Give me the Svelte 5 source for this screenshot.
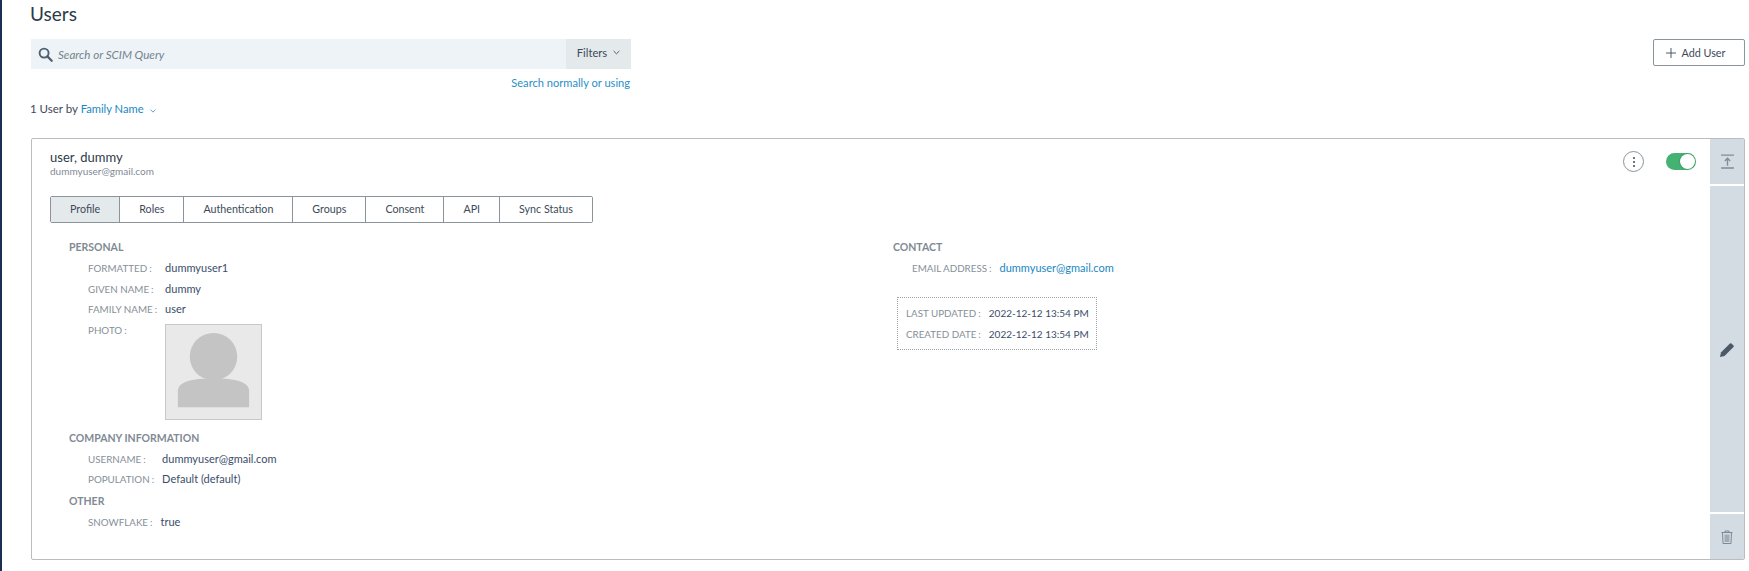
<script>
  const tabs = ["Profile", "Roles", "Authentication", "Groups", "Consent", "API", "Sync Status"];
  let activeTab = $state("Profile");
  let enabled = $state(true);

  const personal = [
    { label: "FORMATTED", value: "dummyuser1" },
    { label: "GIVEN NAME", value: "dummy" },
    { label: "FAMILY NAME", value: "user" },
  ];
  const company = [
    { label: "USERNAME", value: "dummyuser@gmail.com" },
    { label: "POPULATION", value: "Default (default)" },
  ];
  const dates = [
    { label: "LAST UPDATED", value: "2022-12-12 13:54 PM" },
    { label: "CREATED DATE", value: "2022-12-12 13:54 PM" },
  ];
</script>

<div class="page">
  <h1>Users</h1>

  <div class="toolbar">
    <div class="search-col">
      <div class="search">
        <svg class="search-icon" viewBox="0 0 16 16" width="15" height="15">
          <circle cx="6.5" cy="6.5" r="4.8" fill="none" stroke="#4e6072" stroke-width="2" />
          <path d="M10 10l4.6 4.6" stroke="#4e6072" stroke-width="2.4" stroke-linecap="round" />
        </svg>
        <input type="text" placeholder="Search or SCIM Query" />
        <button type="button" class="filters">
          Filters
          <svg class="chev" viewBox="0 0 8 5" width="7" height="5"><path d="M.7.8L4 4l3.3-3.2" /></svg>
        </button>
      </div>
      <a class="hint" href="#top">Search normally or using</a>
    </div>
    <button type="button" class="add-user">
      <svg viewBox="0 0 11 11" width="10" height="10"><path d="M5.5 0v11M0 5.5h11" stroke="#3c4a5a" stroke-width="1" /></svg>
      Add User
    </button>
  </div>

  <div class="count">
    1 User by <a href="#top">Family Name</a>
    <svg class="chev link-chev" viewBox="0 0 8 5" width="6" height="4"><path d="M.7.8L4 4l3.3-3.2" /></svg>
  </div>

  <section class="card">
    <div class="card-main">
      <header class="card-head">
        <div>
          <div class="name">user, dummy</div>
          <div class="mail">dummyuser@gmail.com</div>
        </div>
        <div class="card-actions">
          <button type="button" class="kebab" aria-label="More">
            <svg viewBox="0 0 4 12" width="4" height="12">
              <circle cx="2" cy="2" r="1" /><circle cx="2" cy="6" r="1" /><circle cx="2" cy="10" r="1" />
            </svg>
          </button>
          <button type="button" class="toggle" class:off={!enabled} aria-label="Enabled" onclick={() => (enabled = !enabled)}>
            <span class="knob"></span>
          </button>
        </div>
      </header>

      <div class="tabs">
        {#each tabs as tab}
          <button type="button" class="tab" class:active={activeTab === tab} onclick={() => (activeTab = tab)}>{tab}</button>
        {/each}
      </div>

      <div class="columns">
        <div class="col">
          <h2>PERSONAL</h2>
          <dl class="fields">
            {#each personal as row}
              <dt>{row.label}<span class="colon">:</span></dt>
              <dd>{row.value}</dd>
            {/each}
            <dt>PHOTO<span class="colon">:</span></dt>
            <dd class="photo-cell">
              <div class="photo">
                <svg viewBox="0 0 96 95" width="95" height="94">
                  <circle cx="48" cy="32" r="24" fill="#c4c4c4" />
                  <path d="M12 83V67c0-10 14-13 36-13s36 3 36 13v16z" fill="#c4c4c4" />
                </svg>
              </div>
            </dd>
          </dl>

          <h2 class="company">COMPANY INFORMATION</h2>
          <dl class="fields">
            {#each company as row}
              <dt>{row.label}<span class="colon">:</span></dt>
              <dd>{row.value}</dd>
            {/each}
          </dl>

          <h2 class="other">OTHER</h2>
          <dl class="fields">
            <dt>SNOWFLAKE<span class="colon">:</span></dt>
            <dd>true</dd>
          </dl>
        </div>

        <div class="col">
          <h2>CONTACT</h2>
          <dl class="fields">
            <dt>EMAIL ADDRESS<span class="colon">:</span></dt>
            <dd><a href="#top">dummyuser@gmail.com</a></dd>
          </dl>
          <dl class="fields dates">
            {#each dates as row}
              <dt>{row.label}<span class="colon">:</span></dt>
              <dd>{row.value}</dd>
            {/each}
          </dl>
        </div>
      </div>
    </div>

    <aside class="rail">
      <button type="button" class="rail-btn top" aria-label="Expand">
        <svg viewBox="0 0 14 14" width="15" height="15" fill="none" stroke="#7f8c99" stroke-width="1.3">
          <path d="M1 1h12M1 13h12M7 11V4M4.5 6.5L7 4l2.5 2.5" />
        </svg>
      </button>
      <button type="button" class="rail-btn mid" aria-label="Edit">
        <svg viewBox="0 0 14 14" width="15" height="15">
          <path d="M0 14l.9-4.2L9.3 1.4a1 1 0 011.4 0l1.9 1.9a1 1 0 010 1.4L4.2 13.1z" fill="#4b5866" />
        </svg>
      </button>
      <button type="button" class="rail-btn bottom" aria-label="Delete">
        <svg viewBox="0 0 12 14" width="12" height="14" fill="none" stroke="#7d8995" stroke-width="1">
          <path d="M.5 2.5h11M4 2.5V1h4v1.5M1.5 2.5l.5 11h8l.5-11" />
          <path d="M3.5 4.5h5v7.5h-5z" fill="#a2acb6" stroke="none" />
        </svg>
      </button>
    </aside>
  </section>
</div>

<style>
  :global(body) {
    margin: 0;
    background: #fff;
  }

  .page {
    box-sizing: border-box;
    height: 571px;
    overflow: hidden;
    border-left: 2px solid #1b2f52;
    padding: 0 4px 0 29px;
    font-family: Lato, "Open Sans", sans-serif;
    font-size: 11.2px;
    color: #253746;
  }

  h1 {
    margin: 0 0 0 -1px;
    padding-top: 3px;
    font-size: 19px;
    line-height: 22px;
    font-weight: 400;
    color: #2e3b49;
  }

  .toolbar {
    display: flex;
    justify-content: space-between;
    align-items: flex-start;
    margin-top: 14px;
  }

  .search-col {
    width: 600px;
    display: flex;
    flex-direction: column;
  }

  .search {
    display: flex;
    align-items: center;
    height: 30px;
    background: #edf3f6;
  }

  .search-icon {
    margin-left: 7px;
    flex: none;
  }

  .search input {
    flex: 1;
    min-width: 0;
    border: none;
    background: transparent;
    outline: none;
    padding: 0 0 0 5px;
    font: italic 11.6px Lato, sans-serif;
    color: #253746;
  }

  .search input::placeholder {
    color: #75838f;
    opacity: 1;
  }

  .filters {
    display: flex;
    align-items: center;
    justify-content: center;
    gap: 6px;
    width: 65px;
    height: 100%;
    border: none;
    background: #e4e9ec;
    font: 11.2px Lato, sans-serif;
    color: #3c4a5a;
    padding: 0 0 4px;
  }

  .chev {
    fill: none;
    stroke: #3c4a5a;
    stroke-width: 1;
  }

  .hint {
    align-self: flex-end;
    margin-top: 7px;
    margin-right: 1px;
    line-height: 14px;
    font-size: 11.1px;
    color: #2a8fc7;
    text-decoration: none;
  }

  a {
    color: #1a87c2;
    text-decoration: none;
  }

  .add-user {
    display: flex;
    align-items: center;
    justify-content: center;
    gap: 5px;
    width: 92px;
    height: 27px;
    background: #fff;
    border: 1px solid #8b939b;
    border-radius: 2px;
    font: 10.8px Lato, sans-serif;
    color: #3c4a5a;
    padding: 0 6px 0 0;
  }

  .count {
    margin-top: 11px;
    margin-left: -1px;
    line-height: 16px;
    font-size: 11.5px;
    color: #3c4a5a;
  }

  .count a {
    font-size: 11.2px;
  }

  .link-chev {
    margin-left: 3px;
    stroke: #1a87c2;
  }

  .card {
    box-sizing: border-box;
    display: flex;
    height: 422px;
    margin-top: 21px;
    border: 1px solid #bcbcbc;
    border-radius: 2px;
  }

  .card-main {
    flex: 1;
    min-width: 0;
    padding: 10px 18px 0 18px;
  }

  .card-head {
    display: flex;
    justify-content: space-between;
  }

  .name {
    font-size: 13px;
    line-height: 16px;
    color: #2e3b49;
  }

  .mail {
    font-size: 10px;
    line-height: 12px;
    color: #7f8a94;
  }

  .card-actions {
    display: flex;
    align-items: center;
    gap: 22px;
    margin-right: -4px;
    height: 21px;
    margin-top: 2px;
  }

  .kebab {
    display: grid;
    place-items: center;
    box-sizing: border-box;
    width: 21px;
    height: 21px;
    border: 1px solid #8b939b;
    border-radius: 50%;
    background: #fff;
    padding: 0;
  }

  .kebab svg {
    fill: #3c4a5a;
  }

  .toggle {
    position: relative;
    width: 30px;
    height: 17px;
    border: none;
    border-radius: 9px;
    background: #44b273;
    padding: 0;
  }

  .toggle.off {
    background: #c4ccd3;
  }

  .knob {
    position: absolute;
    top: 1px;
    right: 1px;
    width: 15px;
    height: 15px;
    border-radius: 50%;
    background: #fff;
    box-shadow: 0 0 2px rgba(0, 0, 0, 0.35);
  }

  .toggle.off .knob {
    right: 14px;
  }

  .tabs {
    display: inline-flex;
    margin-top: 19px;
    border: 1px solid #8b939b;
    border-radius: 2px;
    vertical-align: top;
  }

  .tab {
    height: 25px;
    padding: 0 19px 3px;
    border: none;
    border-left: 1px solid #8b939b;
    background: #fff;
    font: 10.7px Lato, sans-serif;
    color: #3c4a5a;
  }

  .tab:first-child {
    border-left: none;
  }

  .tab.active {
    background: #e4e9ec;
  }

  .columns {
    display: grid;
    grid-template-columns: 824px 1fr;
    padding-left: 19px;
    margin-top: 16px;
  }

  h2 {
    margin: 0;
    font-size: 10.5px;
    line-height: 16px;
    font-weight: 700;
    color: #7f8a94;
  }

  h2.company {
    margin-top: 10px;
  }

  h2.other {
    margin-top: 6px;
  }

  .fields {
    display: grid;
    grid-template-columns: auto 1fr;
    column-gap: 8px;
    margin: 5px 0 0 19px;
    row-gap: 4.5px;
  }

  dt {
    font-size: 9.8px;
    line-height: 16px;
    color: #868f98;
    white-space: nowrap;
  }

  .colon {
    margin-left: 2px;
  }

  dd {
    margin: 0;
    font-size: 11px;
    line-height: 16px;
    color: #3a4d6b;
    white-space: nowrap;
  }

  .photo-cell {
    margin-top: 2px;
  }

  .photo {
    box-sizing: border-box;
    width: 97px;
    height: 96px;
    background: #e9e9e9;
    border: 1px solid #c8c8c8;
  }

  .photo svg {
    display: block;
  }

  .dates {
    width: 200px;
    box-sizing: border-box;
    margin: 21px 0 0 4px;
    padding: 7px 8px 7px;
    border: 1px dotted #9aa2aa;
  }

  .dates dd {
    font-size: 10px;
  }

  .rail {
    flex: none;
    width: 34px;
    display: flex;
    flex-direction: column;
    background: #d3dce2;
  }

  .rail-btn {
    display: grid;
    place-items: center;
    border: none;
    background: transparent;
    padding: 0;
  }

  .rail-btn.top {
    height: 45px;
    border-bottom: 2px solid #fff;
    box-sizing: content-box;
  }

  .rail-btn.mid {
    flex: 1;
  }

  .rail-btn.bottom {
    height: 45px;
    border-top: 2px solid #fff;
    box-sizing: content-box;
  }
</style>
